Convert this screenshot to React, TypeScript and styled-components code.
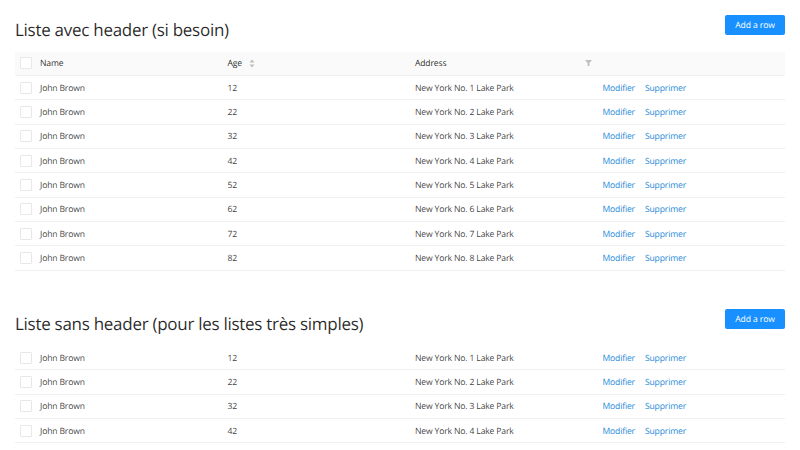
import React from "react";
import styled, { createGlobalStyle } from "styled-components";

const Global = createGlobalStyle`
  html, body { margin: 0; padding: 0; background: #fff; overflow: hidden; }
  body {
    font-family: "Open Sans", "Noto Sans", "Liberation Sans", sans-serif;
    text-rendering: geometricPrecision;
  }
`;
const Page = styled.div`
  padding: 15px 15px 0;
  width: 770px;
  display: flex;
  flex-direction: column;
  gap: 38px;
`;
const Section = styled.section`
  display: flex;
  flex-direction: column;
`;
const TitleBar = styled.div<{ $tall?: boolean }>`
  display: flex;
  justify-content: space-between;
  align-items: flex-start;
  height: ${(p) => (p.$tall ? "37.6px" : "36.6px")};
`;
const Title = styled.h2`
  margin: 0;
  font-size: 17px;
  letter-spacing: -0.28px;
  font-weight: 400;
  line-height: 30px;
  color: rgba(0, 0, 0, 0.85);
`;
const AddButton = styled.button`
  width: 60px;
  height: 20px;
  border: 0;
  border-radius: 2px;
  padding: 0;
  background: #1890ff;
  color: #fff;
  font-family: inherit;
  text-rendering: inherit;
  font-size: 8.6px;
  letter-spacing: -0.1px;
`;
const Row = styled.div<{ $head?: boolean }>`
  display: grid;
  grid-template-columns: 25px 187.5px 187.5px 187.5px 182.5px;
  align-items: center;
  height: 24.33px;
  box-sizing: border-box;
  border-bottom: 1px solid #f0f0f0;
  background: ${(p) => (p.$head ? "#fafafa" : "#fff")};
  font-size: 8.6px;
  letter-spacing: -0.16px;
  color: ${(p) => (p.$head ? "rgba(0,0,0,0.85)" : "rgba(0,0,0,0.78)")};
`;
const Box = styled.span`
  width: 10px;
  height: 10px;
  margin-left: 5px;
  border: 1px solid #e8e8e8;
  border-radius: 1px;
  background: #fff;
`;
const HeadCell = styled.div`
  display: flex;
  align-items: center;
  gap: 7px;
  position: relative;
`;
const Cell = styled.div``;
const Filter = styled.svg`
  position: absolute;
  left: 170px;
  top: 50%;
  margin-top: -3px;
  width: 7px;
  height: 6px;
`;
const Sort = styled.svg`
  width: 6px;
  height: 9px;
`;
const Actions = styled.div`
  display: flex;
  gap: 10px;
  color: #1f8ad9;
`;

const ages = (n: number) => Array.from({ length: n }, (_, i) => i + 1);

function Rows({ n }: { n: number }) {
  return (
    <>
      {ages(n).map((i) => (
        <Row key={i}>
          <Box />
          <Cell>John Brown</Cell>
          <Cell>{i * 10 + 2}</Cell>
          <Cell>New York No. {i} Lake Park</Cell>
          <Actions>
            <span>Modifier</span>
            <span>Supprimer</span>
          </Actions>
        </Row>
      ))}
    </>
  );
}

export default function App() {
  return (
    <Page>
      <Global />
      <Section>
        <TitleBar>
          <Title>Liste avec header (si besoin)</Title>
          <AddButton>Add a row</AddButton>
        </TitleBar>
        <Row $head>
          <Box />
          <HeadCell>Name</HeadCell>
          <HeadCell>
            Age
            <Sort viewBox="0 0 6 9">
              <path d="M3 0.5 L5.5 3.5 H0.5 Z M3 8.5 L0.5 5.5 H5.5 Z" fill="#bfbfbf" />
            </Sort>
          </HeadCell>
          <HeadCell>
            Address
            <Filter viewBox="0 0 7 6">
              <path d="M0 0 H7 L4.4 3 V6 H2.6 V3 Z" fill="#bfbfbf" />
            </Filter>
          </HeadCell>
          <Cell />
        </Row>
        <Rows n={8} />
      </Section>
      <Section>
        <TitleBar $tall>
          <Title>Liste sans header (pour les listes très simples)</Title>
          <AddButton>Add a row</AddButton>
        </TitleBar>
        <Rows n={4} />
      </Section>
    </Page>
  );
}
